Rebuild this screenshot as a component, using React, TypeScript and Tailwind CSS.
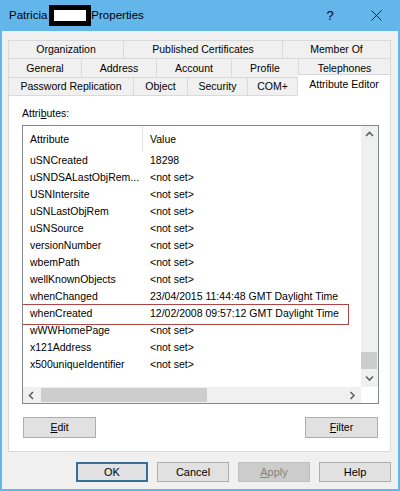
import React from "react";

type Row = { name: string; value: string; marked?: boolean };

const rows: Row[] = [
  { name: "uSNCreated", value: "18298" },
  { name: "uSNDSALastObjRem...", value: "<not set>" },
  { name: "USNIntersite", value: "<not set>" },
  { name: "uSNLastObjRem", value: "<not set>" },
  { name: "uSNSource", value: "<not set>" },
  { name: "versionNumber", value: "<not set>" },
  { name: "wbemPath", value: "<not set>" },
  { name: "wellKnownObjects", value: "<not set>" },
  { name: "whenChanged", value: "23/04/2015 11:44:48 GMT Daylight Time" },
  { name: "whenCreated", value: "12/02/2008 09:57:12 GMT Daylight Time", marked: true },
  { name: "wWWHomePage", value: "<not set>" },
  { name: "x121Address", value: "<not set>" },
  { name: "x500uniqueIdentifier", value: "<not set>" },
];

// tab rows, back to front
const tabRows: { label: string; w: string }[][] = [
  [
    { label: "Organization", w: "w-[116px]" },
    { label: "Published Certificates", w: "w-[159px]" },
    { label: "Member Of", w: "w-[108px]" },
  ],
  [
    { label: "General", w: "w-[74px]" },
    { label: "Address", w: "w-[75px]" },
    { label: "Account", w: "w-[75px]" },
    { label: "Profile", w: "w-[67px]" },
    { label: "Telephones", w: "w-[92px]" },
  ],
];

const frontRow = [
  { label: "Password Replication", w: "w-[126px]" },
  { label: "Object", w: "w-[54px]" },
  { label: "Security", w: "w-[60px]" },
  { label: "COM+", w: "w-[50px]" },
];

function Chevron({ dir }: { dir: "up" | "down" | "left" | "right" }) {
  const pts = {
    up: "1,5 4.5,1.5 8,5",
    down: "1,1.5 4.5,5 8,1.5",
    left: "5,1 1.5,4.5 5,8",
    right: "1.5,1 5,4.5 1.5,8",
  }[dir];
  const horiz = dir === "left" || dir === "right";
  return (
    <svg width={horiz ? 7 : 9} height={horiz ? 9 : 7} viewBox={horiz ? "0 0 7 9" : "0 0 9 7"}>
      <polyline points={pts} fill="none" stroke="#606060" strokeWidth="1.6" />
    </svg>
  );
}

function Button({ children, className = "" }: { children: React.ReactNode; className?: string }) {
  return (
    <div className={`flex items-center justify-center bg-[#e1e1e1] border border-[#adadad] ${className}`}>
      {children}
    </div>
  );
}

export default function App() {
  return (
    <div className="w-[400px] h-[491px] bg-[#62b6ea] flex flex-col font-['Liberation_Sans',Arial,sans-serif] text-black text-[10.5px] leading-none select-none">
      {/* Title bar */}
      <div className="h-[31px] shrink-0 flex items-center pl-[9px] pr-[1px] text-[11.5px]">
        <span>Patricia</span>
        <span className="ml-[2px] w-[42px] h-[21px] border-[5px] border-black bg-white" />
        <span>Properties</span>
        <span className="ml-auto w-[46px] text-center text-[13px]">?</span>
        <span className="w-[46px] flex justify-center">
          <svg width="11" height="11" viewBox="0 0 11 11">
            <path d="M0.5 0.5 L10.5 10.5 M10.5 0.5 L0.5 10.5" stroke="#1a1a1a" strokeWidth="1" />
          </svg>
        </span>
      </div>

      {/* Dialog body */}
      <div className="flex-1 mx-[2px] mb-[2px] bg-[#f0f0f0] flex flex-col pl-[6px] pr-[7px] pt-[9px]">
        {/* Tabs */}
        <div className="flex flex-col">
          {tabRows.map((row, i) => (
            <div key={i} className={`flex ${i === 0 ? "h-[18px]" : "h-[19px]"}`}>
              {row.map((t, j) => (
                <div
                  key={t.label}
                  className={`${t.w} flex items-center justify-center border-t border-r border-[#d9d9d9] ${j === 0 ? "border-l" : ""}`}
                >
                  {t.label}
                </div>
              ))}
            </div>
          ))}
          <div className="flex h-[18px]">
            {frontRow.map((t, j) => (
              <div
                key={t.label}
                className={`${t.w} flex items-center justify-center border-t border-r border-[#d9d9d9] ${j === 0 ? "border-l" : ""}`}
              >
                {t.label}
              </div>
            ))}
            <div className="relative z-10 -mt-[3px] h-[22px] flex-1 bg-white border-t border-r border-[#d9d9d9] flex items-center justify-center pb-[2px]">
              Attribute Editor
            </div>
          </div>
        </div>

        {/* Tab page */}
        <div className="h-[357px] bg-white border border-[#d9d9d9] flex flex-col pl-[13px] pr-[11px] pt-[12px]">
          <div className="h-[12px]">
            Attri<span className="underline">b</span>utes:
          </div>

          {/* List view */}
          <div className="mt-[5px] h-[279px] border border-[#828790] flex flex-col">
            <div className="flex h-[261px]">
              <div className="flex-1 overflow-hidden">
                <div className="flex h-[26px] items-center">
                  <div className="w-[120px] h-full flex items-center pl-[7px] border-r border-[#e5e5e5]">Attribute</div>
                  <div className="pl-[7px]">Value</div>
                </div>
                {rows.map((r) => (
                  <div key={r.name} className="relative flex h-[17px] items-center whitespace-nowrap">
                    <div className="w-[120px] pl-[7px]">{r.name}</div>
                    <div className="pl-[7px]">{r.value}</div>
                    {r.marked && (
                      <span className="absolute -left-[2px] -top-[1px] w-[328px] h-[21px] border border-[#b04545]" />
                    )}
                  </div>
                ))}
              </div>
              {/* Vertical scrollbar */}
              <div className="w-[17px] bg-[#f0f0f0] flex flex-col">
                <div className="h-[17px] flex items-center justify-center">
                  <Chevron dir="up" />
                </div>
                <div className="flex-1 flex flex-col justify-end pb-[1px]">
                  <div className="h-[17px] mr-[1px] bg-[#cdcdcd]" />
                </div>
                <div className="h-[17px] flex items-center justify-center">
                  <Chevron dir="down" />
                </div>
              </div>
            </div>
            {/* Horizontal scrollbar */}
            <div className="flex flex-1">
              <div className="flex-1 bg-[#f0f0f0] flex">
                <div className="w-[17px] flex items-center justify-center">
                  <Chevron dir="left" />
                </div>
                <div className="flex-1 flex items-center">
                  <div className="ml-[1px] w-[166px] h-[14px] bg-[#cdcdcd]" />
                </div>
                <div className="w-[17px] flex items-center justify-center">
                  <Chevron dir="right" />
                </div>
              </div>
              <div className="w-[17px] bg-white" />
            </div>
          </div>

          <div className="mt-[13px] flex justify-between px-[1px]">
            <Button className="w-[73px] h-[21px]">
              <span className="underline">E</span>dit
            </Button>
            <Button className="w-[73px] h-[21px]">
              <span className="underline">F</span>ilter
            </Button>
          </div>
        </div>

        {/* Dialog buttons */}
        <div className="mt-[10px] flex justify-end gap-[9px] text-[11px]">
          <div className="w-[72px] h-[20px] flex items-center justify-center bg-[#e1e1e1] border-2 border-[#3b6e97]">OK</div>
          <Button className="w-[72px] h-[20px]">Cancel</Button>
          <div className="w-[72px] h-[20px] flex items-center justify-center bg-[#cccccc] border border-[#bfbfbf] text-[#838383]">
            <span className="underline">A</span>pply
          </div>
          <Button className="w-[72px] h-[20px]">Help</Button>
        </div>
      </div>
    </div>
  );
}
